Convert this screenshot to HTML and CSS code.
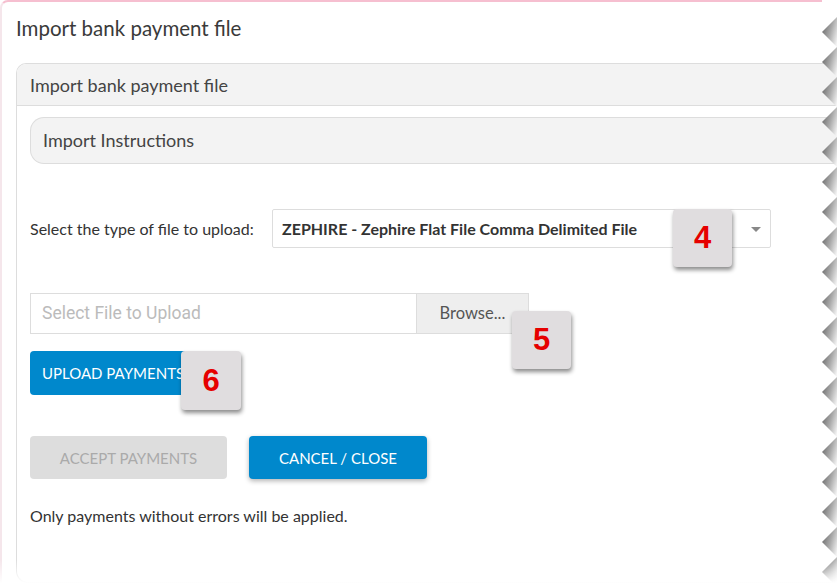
FILE: index.html
```html
<!DOCTYPE html>
<html lang="en">
<head>
<meta charset="utf-8">
<title>Import bank payment file</title>
<link rel="stylesheet" href="styles.css">
</head>
<body>
<div class="page">
  <h1 class="title">Import bank payment file</h1>
  <div class="panel">
    <div class="panel-head">Import bank payment file</div>
    <div class="panel-body">
      <div class="instructions">Import Instructions</div>

      <div class="select-row">
        <label class="label">Select the type of file to upload:</label>
        <div class="select">
          <span class="select-text">ZEPHIRE - Zephire Flat File Comma Delimited File</span>
          <span class="caret"></span>
          <span class="badge badge-4">4</span>
        </div>
      </div>

      <div class="file-row">
        <div class="file-input">Select File to Upload</div>
        <div class="browse">Browse...</div>
        <span class="badge badge-5">5</span>
      </div>

      <div class="upload-row">
        <button class="btn btn-primary btn-upload">UPLOAD PAYMENTS</button>
        <span class="badge badge-6">6</span>
      </div>

      <div class="action-row">
        <button class="btn btn-disabled">ACCEPT PAYMENTS</button>
        <button class="btn btn-primary btn-shadow">CANCEL / CLOSE</button>
      </div>

      <p class="note">Only payments without errors will be applied.</p>
    </div>
  </div>
</div>

<svg class="tear" width="15" height="586" viewBox="0 0 15 586" xmlns="http://www.w3.org/2000/svg">
  <defs>
    <linearGradient id="tg" x1="0" y1="0.3" x2="1" y2="0.85">
      <stop offset="0" stop-color="#6c6c6c"/>
      <stop offset="0.5" stop-color="#a8a8a8"/>
      <stop offset="1" stop-color="#f4f4f4"/>
    </linearGradient>
    <pattern id="teeth" x="0" y="-13" width="15" height="30" patternUnits="userSpaceOnUse">
      <polygon points="0,15 15,0 15,30" fill="url(#tg)"/>
    </pattern>
  </defs>
  <rect x="0" y="17" width="15" height="569" fill="url(#teeth)"/>
</svg>
<div class="fade"></div>
</body>
</html>
```

FILE: styles.css
```css
* { box-sizing: border-box; }

html, body {
  margin: 0;
  padding: 0;
  background: #ffffff;
  width: 837px;
  height: 586px;
  overflow: hidden;
  font-family: Lato, "Open Sans", "Liberation Sans", sans-serif;
  color: #333333;
}

.page {
  position: relative;
  width: 822px;
  height: 600px;
  border-top: 2px solid #f6bfd0;
  border-left: 2px solid #f5e6eb;
  border-top-left-radius: 8px;
  padding: 13px 0 0 14px;
}

.title {
  margin: 0;
  font-size: 20.5px;
  font-weight: 400;
  line-height: 26px;
  color: #3a3a3a;
}

.panel {
  margin-top: 22px;
  width: 840px;
  height: 520px;
  border: 1px solid #dddddd;
  border-right: none;
  border-radius: 10px 0 0 12px;
  overflow: hidden;
}

.panel-head {
  height: 42px;
  background: #f3f3f3;
  border-bottom: 1px solid #dddddd;
  padding-left: 13px;
  font-size: 18px;
  line-height: 42px;
  color: #444444;
}

.panel-body {
  padding: 11px 0 0 13px;
}

.instructions {
  height: 47px;
  background: #f3f3f3;
  border: 1px solid #dddddd;
  border-right: none;
  border-radius: 14px 0 0 14px;
  padding-left: 12px;
  font-size: 18px;
  line-height: 45px;
  color: #444444;
}

.select-row {
  margin-top: 45px;
  display: grid;
  grid-template-columns: 242px 499px;
  align-items: center;
}

.label {
  font-size: 16px;
  color: #333333;
}

.select {
  position: relative;
  height: 39px;
  border: 1px solid #dddddd;
  border-radius: 2px;
  display: flex;
  align-items: center;
  padding-left: 9px;
}

.select-text {
  font-size: 16px;
  font-weight: 700;
  color: #333333;
}

.caret {
  position: absolute;
  right: 9px;
  top: 17px;
  width: 0;
  height: 0;
  border-left: 5px solid transparent;
  border-right: 5px solid transparent;
  border-top: 5px solid #888888;
}

.badge {
  position: absolute;
  width: 59px;
  height: 58px;
  background: #e0dddf;
  border-radius: 4px;
  box-shadow: 1px 3px 4px rgba(0, 0, 0, 0.45);
  color: #e60000;
  font-family: "Liberation Sans", Arial, sans-serif;
  font-weight: 700;
  font-size: 31px;
  line-height: 58px;
  text-align: center;
}

.badge-4 { left: 400px; top: -1px; }

.file-row {
  position: relative;
  margin-top: 45px;
  display: flex;
  height: 41px;
}

.file-input {
  width: 387px;
  height: 41px;
  border: 1px solid #dddddd;
  padding-left: 11px;
  font-family: Roboto, "Open Sans", sans-serif;
  font-size: 17.5px;
  line-height: 39px;
  color: #bbbbbb;
}

.browse {
  width: 112px;
  height: 41px;
  border: 1px solid #dddddd;
  border-left: none;
  background: #eeeeee;
  text-align: center;
  font-size: 16.5px;
  line-height: 39px;
  color: #555555;
}

.badge-5 { left: 482px; top: 18px; }

.upload-row {
  position: relative;
  margin-top: 17px;
  height: 44px;
}

.btn {
  border: none;
  border-radius: 4px;
  font-family: Lato, "Open Sans", "Liberation Sans", sans-serif;
  font-size: 15px;
  padding: 0;
  text-align: center;
}

.btn-primary {
  background: #0088cc;
  color: #ffffff;
}

.btn-upload {
  width: 168px;
  height: 44px;
  text-align: left;
  padding-left: 12px;
}

.badge-6 { left: 151px; top: 0; width: 60px; height: 59px; line-height: 59px; }

.action-row {
  margin-top: 41px;
  display: flex;
  gap: 22px;
}

.action-row .btn {
  height: 43px;
}

.btn-disabled {
  width: 197px;
  background: #dddddd;
  color: #aaaaaa;
}

.btn-shadow {
  width: 178px;
  box-shadow: 0 2px 5px rgba(0, 0, 0, 0.3);
}

.note {
  margin: 28px 0 0 0;
  font-size: 16px;
  line-height: 18px;
  color: #333333;
}

.tear {
  position: absolute;
  left: 822px;
  top: 0;
}

.fade {
  position: absolute;
  left: 0;
  top: 560px;
  width: 837px;
  height: 26px;
  background: linear-gradient(to bottom, rgba(255,255,255,0), #ffffff 90%);
}
```
